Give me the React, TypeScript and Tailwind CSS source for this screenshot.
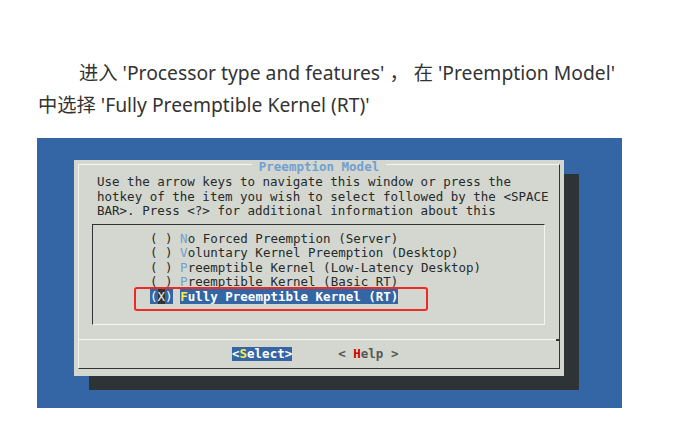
import React from 'react';

const mono = "font-['DejaVu_Sans_Mono',monospace] text-[12.5px] leading-[14.5px]";

interface Item {
  key: string;
  rest: string;
}

const items: Item[] = [
  { key: 'N', rest: 'o Forced Preemption (Server)' },
  { key: 'V', rest: 'oluntary Kernel Preemption (Desktop)' },
  { key: 'P', rest: 'reemptible Kernel (Low-Latency Desktop)' },
  { key: 'P', rest: 'reemptible Kernel (Basic RT)' },
];

const MenuConfig: React.FC = () => {
  return (
    <div className="ml-[37px] w-[585px] h-[270px] bg-[#3465a4] pl-[37px] pt-[22px]">
      {/* Dialog */}
      <div className="w-[490px] h-[216px] bg-[#d3d7cf] shadow-[15px_14px_0_#2e3436] pt-[4px] pl-[4px] pr-[4px] pb-[7px]">
        <div className={`relative h-full flex flex-col border-t border-l border-t-[#f4f4f0] border-l-[#f4f4f0] border-r border-b border-r-[#2e3436] border-b-[#2e3436] text-[#262a2b] ${mono}`}>
          {/* Title over the frame */}
          <div className="absolute -top-[5px] left-0 right-0 flex justify-center">
            <span className="bg-[#d3d7cf] px-[7px] text-[#729fcf] font-bold">Preemption Model</span>
          </div>

          <div className="pl-[18px] pt-[10px] whitespace-pre">
            <div>Use the arrow keys to navigate this window or press the</div>
            <div>hotkey of the item you wish to select followed by the &lt;SPACE</div>
            <div>BAR&gt;. Press &lt;?&gt; for additional information about this</div>
          </div>

          {/* List box */}
          <div className="mt-[5px] ml-[13px] mr-[14px] h-[101px] border-t border-l border-t-[#2e3436] border-l-[#2e3436] border-r border-b border-r-[#f4f4f0] border-b-[#f4f4f0] pl-[57px] pt-[7px] whitespace-pre">
            {items.map((it, i) => (
              <div key={i}>
                ( ) <span className="text-[#729fcf]">{it.key}</span>
                {it.rest}
              </div>
            ))}
            <div className="relative">
              <span className="bg-[#3465a4] text-white">(</span>
              <span className="bg-[#2e3436] text-[#eeeeec]">X</span>
              <span className="bg-[#3465a4] text-white">)</span>{' '}
              <span className="bg-[#3465a4] text-white font-bold">
                <span className="text-[#fce94f]">F</span>ully Preemptible Kernel (RT)
              </span>
              <span className="absolute -left-[16px] -top-[3px] w-[294px] h-[24px] border-2 border-[#ee2a24] rounded-[3px]" />
            </div>
          </div>

          {/* Separator */}
          <div className="mt-[14px] h-px bg-[#f4f4f0] flex justify-end">
            <div className="w-[3px] h-[2px] bg-[#2e3436]" />
          </div>

          {/* Buttons */}
          <div className="flex-1 flex items-center pl-[153px] gap-[46px] font-bold whitespace-pre">
            <span className="bg-[#3465a4] text-white">
              &lt;<span className="text-[#fce94f]">S</span>elect&gt;
            </span>
            <span className="text-[#555753]">
              &lt; <span className="text-[#cc0000]">H</span>elp &gt;
            </span>
          </div>
        </div>
      </div>
    </div>
  );
};

const App: React.FC = () => {
  return (
    <div className="w-[691px] h-[422px] bg-white overflow-hidden">
      <p className="pt-[57px] pl-[38px] text-[19.3px] leading-[32px] text-[#333333] whitespace-nowrap font-['Noto_Sans','Noto_Sans_CJK_SC',sans-serif]">
        <span className="inline-block w-[41px]" />
        进入 'Processor type and features' ， 在 'Preemption Model'
        <br />
        中选择 'Fully Preemptible Kernel (RT)'
      </p>
      <div className="mt-[17px]">
        <MenuConfig />
      </div>
    </div>
  );
};

export default App;
